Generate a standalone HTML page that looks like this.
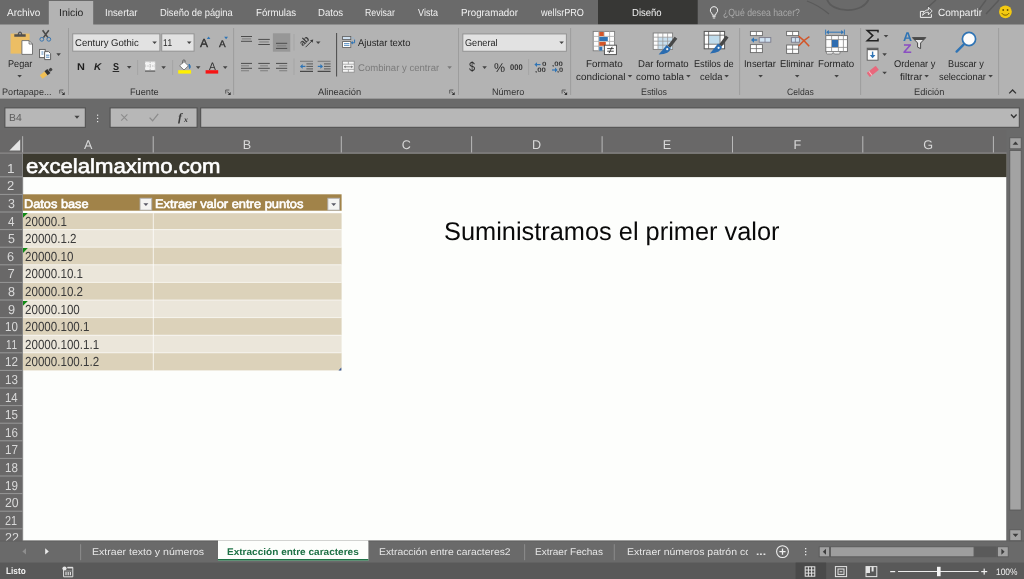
<!DOCTYPE html>
<html lang="es">
<head>
<meta charset="utf-8">
<title>Excel - excelalmaximo.com</title>
<style>
*{box-sizing:border-box;margin:0;padding:0}
html,body{width:1024px;height:579px;overflow:hidden;background:#6a6a6a}
body{position:relative;font-family:"Liberation Sans","DejaVu Sans",sans-serif;font-size:10.4px;color:#262626;font-kerning:none}
#app{position:absolute;left:0;top:0;width:1024px;height:579px;overflow:hidden;will-change:transform}
.r{position:absolute}
.t{position:absolute;white-space:nowrap;line-height:1;transform-origin:0 0;text-rendering:geometricPrecision}
svg{position:absolute;left:0;top:0;width:1024px;height:579px;overflow:hidden}
</style>
</head>
<body>
<div id="app">
<svg viewBox="0 0 1024 579" width="1024" height="579">
<rect x="0" y="0" width="1024" height="24.5" fill="#6a6a6a"/>
<rect x="598" y="0" width="99.7" height="24.5" fill="#373735"/>
<rect x="48.8" y="1" width="44.4" height="24" fill="#b3b3b3"/>
<rect x="0" y="24.5" width="1024" height="74.3" fill="#b3b3b3"/>
<rect x="0" y="98.8" width="1024" height="31.5" fill="#6a6a6a"/>
<rect x="0" y="130" width="1024" height="24" fill="#696868"/>
<rect x="0" y="153.6" width="23" height="388" fill="#696868"/>
<rect x="23" y="153.6" width="983.5" height="387.2" fill="#fdfefc"/>
<rect x="1006.5" y="130" width="17.5" height="411" fill="#6a6a6a"/>
<rect x="0" y="540.8" width="1024" height="22" fill="#6a6a6a"/>
<rect x="0" y="562.6" width="1024" height="16.4" fill="#595959"/>
<rect x="68" y="28" width="0.9" height="67" fill="#9b9b9b"/>
<rect x="233.2" y="28" width="0.9" height="67" fill="#9b9b9b"/>
<rect x="458" y="28" width="0.9" height="67" fill="#9b9b9b"/>
<rect x="570.2" y="28" width="0.9" height="67" fill="#9b9b9b"/>
<rect x="739.2" y="28" width="0.9" height="67" fill="#9b9b9b"/>
<rect x="860.2" y="28" width="0.9" height="67" fill="#9b9b9b"/>
<rect x="998.2" y="28" width="0.9" height="67" fill="#9b9b9b"/>
<rect x="137.3" y="60" width="0.8" height="15" fill="#a2a2a2"/>
<rect x="172.3" y="60" width="0.8" height="15" fill="#a2a2a2"/>
<rect x="293.6" y="34" width="0.8" height="16.5" fill="#a2a2a2"/>
<rect x="293.6" y="58.5" width="0.8" height="16.5" fill="#a2a2a2"/>
<rect x="528.3" y="59" width="0.8" height="16" fill="#a2a2a2"/>
<rect x="336.1" y="33" width="1" height="43.5" fill="#4a4a4a"/>
<rect x="72.75" y="33.85" width="87.10" height="17.30" fill="#e2e2e2" stroke="#8e8e8e" stroke-width="0.9"/>
<rect x="161.75" y="33.85" width="32.30" height="17.30" fill="#e2e2e2" stroke="#8e8e8e" stroke-width="0.9"/>
<rect x="112.6" y="71" width="6.6" height="1" fill="#2a2a2a"/>
<rect x="178.2" y="70.2" width="12.9" height="3.4" fill="#fff000"/>
<rect x="205.6" y="70.2" width="12.6" height="3.4" fill="#f71414"/>
<rect x="272.9" y="33.3" width="17.4" height="18.4" fill="#979797"/>
<rect x="462.85" y="33.95" width="103.50" height="17.30" fill="#e2e2e2" stroke="#8e8e8e" stroke-width="0.9"/>
<rect x="4.90" y="107.90" width="80.40" height="19.40" fill="#b7b7b7" stroke="#4d4d4d" stroke-width="1.0"/>
<rect x="110.10" y="107.90" width="87.00" height="19.40" fill="#b7b7b7" stroke="#4d4d4d" stroke-width="1.0"/>
<rect x="200.70" y="107.90" width="818.60" height="19.40" fill="#b7b7b7" stroke="#4d4d4d" stroke-width="1.0"/>
<rect x="152.7" y="136.2" width="1" height="17.4" fill="#b9b9b9"/>
<rect x="340.8" y="136.2" width="1" height="17.4" fill="#b9b9b9"/>
<rect x="471.1" y="136.2" width="1" height="17.4" fill="#b9b9b9"/>
<rect x="601.6" y="136.2" width="1" height="17.4" fill="#b9b9b9"/>
<rect x="732.0" y="136.2" width="1" height="17.4" fill="#b9b9b9"/>
<rect x="862.3" y="136.2" width="1" height="17.4" fill="#b9b9b9"/>
<rect x="992.9" y="136.2" width="1" height="17.4" fill="#b9b9b9"/>
<rect x="22.2" y="136.2" width="0.9" height="17.4" fill="#b9b9b9"/>
<rect x="0" y="152.4" width="1006.5" height="1.5" fill="#868484"/>
<rect x="0" y="176.3" width="22.6" height="1" fill="#979797"/>
<rect x="0" y="193.9" width="22.6" height="1" fill="#979797"/>
<rect x="0" y="211.5" width="22.6" height="1" fill="#979797"/>
<rect x="0" y="229.10000000000002" width="22.6" height="1" fill="#979797"/>
<rect x="0" y="246.70000000000002" width="22.6" height="1" fill="#979797"/>
<rect x="0" y="264.3" width="22.6" height="1" fill="#979797"/>
<rect x="0" y="281.90000000000003" width="22.6" height="1" fill="#979797"/>
<rect x="0" y="299.5" width="22.6" height="1" fill="#979797"/>
<rect x="0" y="317.1" width="22.6" height="1" fill="#979797"/>
<rect x="0" y="334.70000000000005" width="22.6" height="1" fill="#979797"/>
<rect x="0" y="352.3" width="22.6" height="1" fill="#979797"/>
<rect x="0" y="369.90000000000003" width="22.6" height="1" fill="#979797"/>
<rect x="0" y="387.5" width="22.6" height="1" fill="#979797"/>
<rect x="0" y="405.1" width="22.6" height="1" fill="#979797"/>
<rect x="0" y="422.70000000000005" width="22.6" height="1" fill="#979797"/>
<rect x="0" y="440.3" width="22.6" height="1" fill="#979797"/>
<rect x="0" y="457.90000000000003" width="22.6" height="1" fill="#979797"/>
<rect x="0" y="475.50000000000006" width="22.6" height="1" fill="#979797"/>
<rect x="0" y="493.1" width="22.6" height="1" fill="#979797"/>
<rect x="0" y="510.70000000000005" width="22.6" height="1" fill="#979797"/>
<rect x="0" y="528.3" width="22.6" height="1" fill="#979797"/>
<rect x="22.4" y="153.6" width="0.8" height="387.2" fill="#9a9a9a"/>
<rect x="23" y="153.8" width="983.5" height="23.3" fill="#3c3a2f"/>
<rect x="23" y="194.3" width="318.6" height="16.6" fill="#a18349"/>
<rect x="23" y="210.8" width="318.6" height="2.4" fill="#fdfefc"/>
<rect x="23" y="213.2" width="318.6" height="16.400000000000023" fill="#dcd2ba"/>
<rect x="23" y="229.60000000000002" width="318.6" height="17.599999999999994" fill="#ebe6da"/>
<rect x="23" y="229.10000000000002" width="318.6" height="1" fill="rgba(255,255,255,0.6)"/>
<rect x="23" y="247.20000000000002" width="318.6" height="17.599999999999994" fill="#dcd2ba"/>
<rect x="23" y="246.70000000000002" width="318.6" height="1" fill="rgba(255,255,255,0.6)"/>
<rect x="23" y="264.8" width="318.6" height="17.600000000000023" fill="#ebe6da"/>
<rect x="23" y="264.3" width="318.6" height="1" fill="rgba(255,255,255,0.6)"/>
<rect x="23" y="282.40000000000003" width="318.6" height="17.599999999999966" fill="#dcd2ba"/>
<rect x="23" y="281.90000000000003" width="318.6" height="1" fill="rgba(255,255,255,0.6)"/>
<rect x="23" y="300.0" width="318.6" height="17.600000000000023" fill="#ebe6da"/>
<rect x="23" y="299.5" width="318.6" height="1" fill="rgba(255,255,255,0.6)"/>
<rect x="23" y="317.6" width="318.6" height="17.600000000000023" fill="#dcd2ba"/>
<rect x="23" y="317.1" width="318.6" height="1" fill="rgba(255,255,255,0.6)"/>
<rect x="23" y="335.20000000000005" width="318.6" height="17.599999999999966" fill="#ebe6da"/>
<rect x="23" y="334.70000000000005" width="318.6" height="1" fill="rgba(255,255,255,0.6)"/>
<rect x="23" y="352.8" width="318.6" height="17.600000000000023" fill="#dcd2ba"/>
<rect x="23" y="352.3" width="318.6" height="1" fill="rgba(255,255,255,0.6)"/>
<rect x="152.8" y="213.2" width="1" height="157.2" fill="rgba(255,255,255,0.75)"/>
<rect x="140.05" y="198.25" width="11.70" height="11.90" fill="#f4f4f2" stroke="#b0b0b0" stroke-width="0.9"/>
<rect x="327.85" y="198.25" width="11.70" height="11.90" fill="#f4f4f2" stroke="#b0b0b0" stroke-width="0.9"/>
<rect x="1009.80" y="137.80" width="11.40" height="11.00" fill="#a3a3a3" stroke="#565656" stroke-width="0.8"/>
<rect x="1009.80" y="150.40" width="11.40" height="359.60" fill="#a3a3a3" stroke="#565656" stroke-width="0.8"/>
<rect x="1009.80" y="529.80" width="11.40" height="11.00" fill="#a3a3a3" stroke="#565656" stroke-width="0.8"/>
<rect x="80.2" y="544.2" width="0.9" height="16" fill="#8f8f8f"/>
<rect x="524.2" y="544.2" width="0.9" height="16" fill="#8f8f8f"/>
<rect x="613.8" y="544.2" width="0.9" height="16" fill="#8f8f8f"/>
<rect x="218" y="540.8" width="150.4" height="19.8" fill="#fdfefc"/>
<rect x="218" y="559" width="150.4" height="1.6" fill="#1e7145"/>
<rect x="819.20" y="546.80" width="10.20" height="10.00" fill="#a3a3a3" stroke="#565656" stroke-width="0.8"/>
<rect x="830.40" y="546.80" width="143.60" height="10.00" fill="#9e9e9e" stroke="#565656" stroke-width="0.8"/>
<rect x="974.4" y="546.4" width="22.4" height="10.8" fill="#5a5a5a"/>
<rect x="997.40" y="546.80" width="10.80" height="10.00" fill="#a3a3a3" stroke="#565656" stroke-width="0.8"/>
<rect x="0" y="540.6" width="218" height="0.8" fill="#5c5c5c"/>
<rect x="368.4" y="540.6" width="656" height="0.8" fill="#5c5c5c"/>
<rect x="795.6" y="562.6" width="30.6" height="16.4" fill="#4a4a4a"/>
<rect x="890.2" y="571" width="5" height="1.2" fill="#f0f0f0"/>
<rect x="898" y="571" width="80.6" height="1" fill="#ececec"/>
<rect x="937" y="566.8" width="3.6" height="9.4" fill="#f4f4f4"/>
<rect x="981.2" y="571" width="6" height="1.2" fill="#f0f0f0"/>
<rect x="983.6" y="568.6" width="1.2" height="6" fill="#f0f0f0"/>
<path d="M59.699999999999996,93.6V90.0H63.3" stroke="#555" stroke-width="0.9" fill="none"/><path d="M61.3,91.6L63.9,94.19999999999999" stroke="#333" stroke-width="0.9" fill="none"/><path d="M64.7,92.0V95.0H61.699999999999996z" fill="#333"/>
<path d="M225.70000000000002,93.6V90.0H229.3" stroke="#555" stroke-width="0.9" fill="none"/><path d="M227.3,91.6L229.9,94.19999999999999" stroke="#333" stroke-width="0.9" fill="none"/><path d="M230.70000000000002,92.0V95.0H227.70000000000002z" fill="#333"/>
<path d="M449.7,93.6V90.0H453.3" stroke="#555" stroke-width="0.9" fill="none"/><path d="M451.3,91.6L453.90000000000003,94.19999999999999" stroke="#333" stroke-width="0.9" fill="none"/><path d="M454.7,92.0V95.0H451.7z" fill="#333"/>
<path d="M562.1,93.6V90.0H565.7" stroke="#555" stroke-width="0.9" fill="none"/><path d="M563.7,91.6L566.3000000000001,94.19999999999999" stroke="#333" stroke-width="0.9" fill="none"/><path d="M567.1,92.0V95.0H564.1z" fill="#333"/>
<path d="M17.30,74.90h4.6l-2.30,2.6z" fill="#444444"/>
<path d="M56.30,53.30h4.6l-2.30,2.6z" fill="#444444"/>
<path d="M152.30,41.50h4.6l-2.30,2.6z" fill="#444444"/>
<path d="M186.90,41.50h4.6l-2.30,2.6z" fill="#444444"/>
<path d="M126.90,66.10h4.6l-2.30,2.6z" fill="#444444"/>
<path d="M161.30,66.30h4.6l-2.30,2.6z" fill="#444444"/>
<path d="M195.90,66.30h4.6l-2.30,2.6z" fill="#444444"/>
<path d="M222.90,66.30h4.6l-2.30,2.6z" fill="#444444"/>
<rect x="241.00" y="36.00" width="11" height="1" fill="#4c4c4c"/>
<rect x="241.80" y="38.40" width="9.4" height="1" fill="#7d7d7d"/>
<rect x="241.00" y="40.80" width="11" height="1" fill="#4c4c4c"/>
<rect x="258.30" y="38.90" width="11.5" height="1" fill="#4c4c4c"/>
<rect x="259.25" y="41.45" width="9.6" height="1" fill="#7d7d7d"/>
<rect x="258.30" y="44.00" width="11.5" height="1" fill="#4c4c4c"/>
<rect x="276.00" y="42.80" width="11.2" height="1" fill="#4c4c4c"/>
<rect x="276.90" y="45.35" width="9.4" height="1" fill="#7d7d7d"/>
<rect x="276.00" y="47.90" width="11.2" height="1" fill="#4c4c4c"/>
<rect x="241.00" y="62.90" width="11" height="1" fill="#4c4c4c"/>
<rect x="241.00" y="65.35" width="8" height="1" fill="#7d7d7d"/>
<rect x="241.00" y="67.80" width="11" height="1" fill="#4c4c4c"/>
<rect x="241.00" y="70.25" width="8" height="1" fill="#7d7d7d"/>
<rect x="258.30" y="62.90" width="11.5" height="1" fill="#4c4c4c"/>
<rect x="260.15" y="65.35" width="7.8" height="1" fill="#7d7d7d"/>
<rect x="258.30" y="67.80" width="11.5" height="1" fill="#4c4c4c"/>
<rect x="260.15" y="70.25" width="7.8" height="1" fill="#7d7d7d"/>
<rect x="276.00" y="62.90" width="11.2" height="1" fill="#4c4c4c"/>
<rect x="279.20" y="65.35" width="8" height="1" fill="#7d7d7d"/>
<rect x="276.00" y="67.80" width="11.2" height="1" fill="#4c4c4c"/>
<rect x="279.20" y="70.25" width="8" height="1" fill="#7d7d7d"/>
<path d="M315.90,41.50h4.6l-2.30,2.6z" fill="#444444"/>
<path d="M447.30,66.30h4.6l-2.30,2.6z" fill="#7a7a7a"/>
<path d="M559.30,41.50h4.6l-2.30,2.6z" fill="#444444"/>
<path d="M482.30,66.30h4.6l-2.30,2.6z" fill="#444444"/>
<path d="M627.70,74.90h4.6l-2.30,2.6z" fill="#444444"/>
<path d="M686.10,74.90h4.6l-2.30,2.6z" fill="#444444"/>
<path d="M724.30,74.90h4.6l-2.30,2.6z" fill="#444444"/>
<path d="M924.30,74.90h4.6l-2.30,2.6z" fill="#444444"/>
<path d="M988.30,74.90h4.6l-2.30,2.6z" fill="#444444"/>
<path d="M758.30,74.90h4.6l-2.30,2.6z" fill="#444444"/>
<path d="M794.90,74.90h4.6l-2.30,2.6z" fill="#444444"/>
<path d="M834.30,74.90h4.6l-2.30,2.6z" fill="#444444"/>
<path d="M883.70,34.90h4.6l-2.30,2.6z" fill="#444444"/>
<path d="M882.30,53.30h4.6l-2.30,2.6z" fill="#444444"/>
<path d="M882.30,71.70h4.6l-2.30,2.6z" fill="#444444"/>
<path d="M1009.2,93.4l3.4,-3.4l3.4,3.4" stroke="#333" stroke-width="1.3" fill="none"/>
<path d="M74.40,115.70h5.2l-2.60,3z" fill="#444"/>
<rect x="97" y="114.6" width="1.2" height="1.2" fill="#e8e8e8"/>
<rect x="97" y="117.8" width="1.2" height="1.2" fill="#e8e8e8"/>
<rect x="97" y="121" width="1.2" height="1.2" fill="#e8e8e8"/>
<path d="M121.2,114.4l6.2,6.2M127.4,114.4l-6.2,6.2" stroke="#8c8c8c" stroke-width="1.1" fill="none"/>
<path d="M149.6,117.6l3,3.2l5.6,-7" stroke="#8c8c8c" stroke-width="1.3" fill="none"/>
<path d="M1011,114.6l2.8,2.8l2.8,-2.8" stroke="#333" stroke-width="1.4" fill="none"/>
<path d="M20.2,139.6V150.4H9.4z" fill="#e4e4e4"/>
<path d="M143.40,203.20h5l-2.50,2.8z" fill="#5a5a66"/>
<path d="M331.20,203.20h5l-2.50,2.8z" fill="#5a5a66"/>
<path d="M23,212.90h4.8l-4.8,4.8z" fill="#0f8a14"/>
<path d="M23,248.10h4.8l-4.8,4.8z" fill="#0f8a14"/>
<path d="M23,300.90h4.8l-4.8,4.8z" fill="#0f8a14"/>
<path d="M341.3,367.6v2.8h-2.8z" fill="#3a5a9a"/>
<path d="M1012.6,144.8h5.8l-2.9,-3.2z" fill="#3c3c3c"/>
<path d="M1012.6,533.8h5.8l-2.9,3.2z" fill="#3c3c3c"/>
<path d="M26,548.2v6.4l-3.6,-3.2z" fill="#8e8e8e"/>
<path d="M45.2,548.2v6.4l3.6,-3.2z" fill="#ececec"/>
<circle cx="782.5" cy="551.6" r="5.9" fill="none" stroke="#f0f0f0" stroke-width="1.1"/><path d="M779.4,551.6h6.2M782.5,548.5v6.2" stroke="#f0f0f0" stroke-width="1.3" fill="none"/>
<rect x="805" y="548" width="1.3" height="1.3" fill="#e8e8e8"/>
<rect x="805" y="551" width="1.3" height="1.3" fill="#e8e8e8"/>
<rect x="805" y="554" width="1.3" height="1.3" fill="#e8e8e8"/>
<path d="M826,548.8v6l-3.2,-3z" fill="#3c3c3c"/>
<path d="M1001.4,548.8v6l3.2,-3z" fill="#3c3c3c"/>
<path d="M63.6,569.4v7.4h9.2v-9.4h-5.2" fill="none" stroke="#e0e0e0" stroke-width="1"/><rect x="67.4" y="566.9" width="5.4" height="1.5" fill="#e0e0e0"/><path d="M66,572v3.2M68.2,572v3.2M70.4,572v3.2" stroke="#e0e0e0" stroke-width="1.2"/><path d="M65,571h6.6" stroke="#c8c8c8" stroke-width="0.6"/><circle cx="64.5" cy="568.5" r="2.1" fill="#e6e6e6"/>
<g fill="none" stroke="#e4e4e4" stroke-width="1"><rect x="805.2" y="566.8" width="9.6" height="9.4"/><path d="M808.4,566.8v9.4M811.6,566.8v9.4M805.2,570v0h9.6M805.2,573.1h9.6"/></g>
<g fill="none" stroke="#e4e4e4" stroke-width="1"><rect x="835.4" y="566.6" width="11.2" height="10"/><rect x="838" y="569" width="6" height="5.4"/><path d="M839.6,571.8h2.8"/></g>
<g fill="none" stroke="#e4e4e4" stroke-width="1"><rect x="866" y="566.6" width="10.8" height="10"/></g><path d="M866,566.6h4v6.4h-4z M871.6,566.6h2v5h-2z" fill="#e4e4e4"/>
<rect x="10.6" y="33.6" width="19" height="20" fill="#ecbe64"/><path d="M14.3,36.8v-2.6h3.4c0.2,-1.6 1.2,-2.8 2.3,-2.8s2.1,1.2 2.3,2.8h3.4v2.6z" fill="#505050"/><circle cx="20" cy="33.6" r="0.9" fill="#b0b0b0"/><path d="M21.9,40.6h7.2l3.4,3.4v10.4h-10.6z" fill="#ffffff" stroke="#6a6a6a" stroke-width="0.9"/><path d="M29.1,40.6v3.4h3.4" fill="none" stroke="#6a6a6a" stroke-width="0.9"/>
<path d="M42.6,30.2l5.4,7.4M48.8,30.2l-5.4,7.4" stroke="#4a4a4a" stroke-width="1.6" fill="none"/><circle cx="41.8" cy="39.3" r="1.9" fill="none" stroke="#3a76b0" stroke-width="1"/><circle cx="48.8" cy="39.3" r="1.9" fill="none" stroke="#3a76b0" stroke-width="1"/>
<rect x="39.6" y="49.4" width="5.6" height="8.2" fill="#fff" stroke="#555" stroke-width="0.9"/><path d="M41.4,52h2M41.4,54h2" stroke="#3a76b0" stroke-width="0.9"/><path d="M44.6,51.6h4l2,2v6h-6z" fill="#fff" stroke="#555" stroke-width="0.9"/><path d="M46,55.2h3.4M46,57.2h3.4" stroke="#3a76b0" stroke-width="0.9"/>
<g transform="rotate(-38 46 72.5)"><rect x="39.4" y="70.8" width="6.4" height="4.6" fill="#efbf55"/><rect x="45.6" y="70.6" width="3.6" height="5" fill="#333"/><rect x="49.6" y="71.6" width="3.4" height="3" rx="1" fill="#444"/></g>
<path d="M206.8,39h3.6l-1.8,-2.4z" fill="#2f74b5"/><path d="M224.2,36.8h3.8l-1.9,2.4z" fill="#2f74b5"/>
<rect x="145" y="61.6" width="10.2" height="9" fill="#f4f4f4"/><path d="M145,66h10.2M150.1,61.6v9" stroke="#b3b3b3" stroke-width="1" stroke-dasharray="1.2 1.2"/><path d="M145,61.9h10.2M145.3,61.6v9M154.9,61.6v9" stroke="#c6c6c6" stroke-width="0.6" stroke-dasharray="1.2 1.2" fill="none"/><rect x="145" y="70.5" width="10.2" height="1.1" fill="#505050"/>
<path d="M184,61.6l4.4,4.2l-4.4,4.2l-4.4,-4.2z" fill="#fcfcfc" stroke="#666" stroke-width="0.8"/><path d="M182.6,63.4v-2.2a1.3,1.3 0 0 1 2.6,0v1" fill="none" stroke="#555" stroke-width="0.8"/><path d="M189,64c1.6,1.6 1.8,3.4 0.6,4.6c-0.4,-1.2 -0.6,-2.8 -0.6,-4.6z" fill="#2f74b5" stroke="#2f74b5" stroke-width="0.8"/>
<path d="M305.6,47.2l6.8,-6.8" stroke="#3c3c3c" stroke-width="1" fill="none"/><path d="M313.2,39.6l-3.2,0.6l2.6,2.6z" fill="#3c3c3c"/>
<rect x="342.6" y="36.4" width="8.2" height="3.2" fill="#cfe0f0" stroke="#5a5a5a" stroke-width="0.8"/><rect x="342.6" y="41.6" width="8.2" height="5.8" fill="#fff" stroke="#5a5a5a" stroke-width="0.8"/><path d="M344,43.6h5.4M344,45.4h5.4" stroke="#2f74b5" stroke-width="0.8"/><path d="M354.6,39.6v3.2h-3" stroke="#2f74b5" stroke-width="1" fill="none"/><path d="M350.8,42.8l2,-1.8v3.6z" fill="#2f74b5"/><path d="M351.6,38h2.6" stroke="#8fb3d6" stroke-width="0.9"/>
<rect x="300" y="60.8" width="13" height="1" fill="#7a7a7a"/><rect x="300" y="70.8" width="13" height="1.1" fill="#3c3c3c"/>
<rect x="306.4" y="63.4" width="6.6" height="1" fill="#5a5a5a"/>
<rect x="306.4" y="65.9" width="6.6" height="1" fill="#5a5a5a"/>
<rect x="306.4" y="68.4" width="6.6" height="1" fill="#5a5a5a"/>
<path d="M301.6,66.4h3.8" stroke="#2f74b5" stroke-width="1.2"/><path d="M300,66.4l2.6,-2.4v4.8z" fill="#2f74b5"/>
<rect x="317.6" y="60.8" width="13" height="1" fill="#7a7a7a"/><rect x="317.6" y="70.8" width="13" height="1.1" fill="#3c3c3c"/>
<rect x="324.0" y="63.4" width="6.6" height="1" fill="#5a5a5a"/>
<rect x="324.0" y="65.9" width="6.6" height="1" fill="#5a5a5a"/>
<rect x="324.0" y="68.4" width="6.6" height="1" fill="#5a5a5a"/>
<path d="M317.8,66.4h3.6" stroke="#2f74b5" stroke-width="1.2"/><path d="M323.0,66.4l-2.6,-2.4v4.8z" fill="#2f74b5"/>
<rect x="342.6" y="61.2" width="11.6" height="11" fill="#f6f6f6" stroke="#8a8a8a" stroke-width="0.8"/><path d="M342.6,64.2h11.6M342.6,69.4h11.6M348.4,61.2v3M348.4,69.4v2.8" stroke="#9a9a9a" stroke-width="0.8"/><path d="M344.4,66.8h8" stroke="#7a7a7a" stroke-width="0.9"/><path d="M343.8,66.8l1.8,-1.4v2.8zM353,66.8l-1.8,-1.4v2.8z" fill="#7a7a7a"/>
<path d="M536,64.6h4.4" stroke="#2f74b5" stroke-width="1.2"/><path d="M534.4,64.6l2.6,-2.4v4.8z" fill="#2f74b5"/>
<path d="M552,70h4" stroke="#2f74b5" stroke-width="1.2"/><path d="M557.6,70l-2.6,-2.4v4.8z" fill="#2f74b5"/>
<rect x="593.2" y="31.4" width="21.4" height="19.4" fill="#fdfdfd" stroke="#7d7d7d" stroke-width="0.9"/><path d="M598.7,31.4v19.4M604.1,31.4v19.4M609.6,31.4v19.4M593.2,36.4h21.4M593.2,41.4h21.4M593.2,46.2h21.4" stroke="#a8a8a8" stroke-width="0.8" fill="none"/><rect x="599.2" y="32" width="4.6" height="4" fill="#d2562a"/><rect x="599.2" y="37" width="8.6" height="4" fill="#2f74b5"/><rect x="599.2" y="42" width="6.6" height="3.8" fill="#d2562a"/><rect x="599.2" y="46.8" width="3.2" height="3.8" fill="#2f74b5"/><rect x="604.4" y="45.2" width="12" height="9.4" fill="#fdfdfd" stroke="#4a4a4a" stroke-width="0.9"/><path d="M607.2,48.6h6.6M607.2,51.2h6.6M612.2,46.8l-3.2,6.4" stroke="#333" stroke-width="0.9" fill="none"/>
<rect x="653.2" y="33" width="19.4" height="16.4" fill="#fdfdfd" stroke="#7d7d7d" stroke-width="0.9"/><rect x="658" y="37.2" width="14.2" height="11.8" fill="#c9e0f0"/><path d="M658,33v16.4M662.8,33v16.4M667.6,33v16.4M653.2,37.2h19.4M653.2,41.2h19.4M653.2,45.2h19.4" stroke="#9a9a9a" stroke-width="0.8" fill="none"/>
<path d="M676,37.8L669.0,46.800000000000004" stroke="#474747" stroke-width="3.4" stroke-linecap="butt" fill="none"/><path d="M666.6,45.0L670.6,48.2Q670.0,54.2 658.6,54.4Q663.0,49.8 666.6,45.0z" fill="#2a6cb0"/><circle cx="667.2" cy="49.2" r="1.1" fill="#f0f4f8"/>
<rect x="704.2" y="31.4" width="20.4" height="17.4" fill="#fdfdfd" stroke="#555" stroke-width="1"/><rect x="709" y="35.6" width="10.6" height="8.2" fill="#c0dcec"/><path d="M708.6,31.4v17.4M720,31.4v17.4M704.2,35.2h20.4M704.2,44.2h20.4" stroke="#555" stroke-width="0.8" fill="none"/>
<path d="M727.2,36.4L720.4,45.400000000000006" stroke="#474747" stroke-width="3.4" stroke-linecap="butt" fill="none"/><path d="M718.0,43.6L722.0,46.8Q721.4,52.8 710,53.4Q714.4,48.4 718.0,43.6z" fill="#2a6cb0"/><circle cx="718.6" cy="47.8" r="1.1" fill="#f0f4f8"/>
<rect x="750.4" y="31.4" width="12" height="4.2" fill="#fdfdfd" stroke="#6a6a6a" stroke-width="0.9"/><path d="M756.4,31.4v4.2" stroke="#6a6a6a" stroke-width="0.8"/>
<rect x="759.2" y="37.6" width="11.6" height="4.6" fill="#cfe2f2" stroke="#7a7a8a" stroke-width="0.9"/><path d="M765.0,37.6v4.6" stroke="#7a7a8a" stroke-width="0.8"/>
<rect x="750.4" y="44.6" width="12" height="8" fill="#fdfdfd" stroke="#6a6a6a" stroke-width="0.9"/><path d="M756.4,44.6v8" stroke="#6a6a6a" stroke-width="0.8"/><path d="M750.4,48.6h12" stroke="#6a6a6a" stroke-width="0.8"/>
<path d="M753.2,40h4" stroke="#2f74b5" stroke-width="1.4"/><path d="M751,40l3,-2.8v5.6z" fill="#2f74b5"/>
<rect x="786.6" y="31.4" width="12" height="4.2" fill="#fdfdfd" stroke="#6a6a6a" stroke-width="0.9"/><path d="M792.6,31.4v4.2" stroke="#6a6a6a" stroke-width="0.8"/>
<rect x="791.4" y="37.6" width="8" height="4.6" fill="#cfe2f2" stroke="#7a7a8a" stroke-width="0.9"/><path d="M795.4,37.6v4.6" stroke="#7a7a8a" stroke-width="0.8"/>
<rect x="786.6" y="45" width="12" height="8.4" fill="#fdfdfd" stroke="#6a6a6a" stroke-width="0.9"/><path d="M792.6,45v8.4" stroke="#6a6a6a" stroke-width="0.8"/><path d="M786.6,49.2h12" stroke="#6a6a6a" stroke-width="0.8"/>
<path d="M798.6,36.2c4,3 7.4,6.2 10.6,10M809.4,36.6c-4,2.4 -7.6,5.4 -10.8,9.4" stroke="#d2562a" stroke-width="1.5" fill="none"/>
<path d="M827,32.2h16" stroke="#2f74b5" stroke-width="1"/><path d="M826.2,32.2l2.6,-2.2v4.4zM843.8,32.2l-2.6,-2.2v4.4z" fill="#2f74b5"/><path d="M825.6,29.6v5.2M844.4,29.6v5.2" stroke="#2f74b5" stroke-width="0.9"/><rect x="825.8" y="35.6" width="21.6" height="16" fill="#fdfdfd" stroke="#6a6a6a" stroke-width="0.9"/><path d="M831.6,35.6v16M838.4,35.6v16M843.4,35.6v16M825.8,39.6h21.6M825.8,47.4h21.6" stroke="#8a8a8a" stroke-width="0.8" fill="none"/><rect x="832" y="40" width="6" height="7" fill="#2f6db0"/><path d="M826.4,51.6v1.4q0,1 1,1h4.6l1.2,-1.6l1.2,1.6h4.6q1,0 1,-1v-1.4z" fill="#f4f4f4" stroke="#6a6a6a" stroke-width="0.7"/>
<path d="M878,32.6v-2.2h-10.8l5.6,5.2l-5.6,5.2h10.8v-2.2" fill="none" stroke="#222" stroke-width="1.5" stroke-linejoin="miter"/>
<rect x="867.2" y="48.2" width="10.8" height="12" fill="#fdfdfd" stroke="#5a5a5a" stroke-width="0.9"/><rect x="867.2" y="48.2" width="10.8" height="2" fill="#5a5a5a"/><path d="M872.6,51.6v5" stroke="#2f74b5" stroke-width="1.4"/><path d="M869.8,55l2.8,3.2l2.8,-3.2z" fill="#2f74b5"/>
<g transform="rotate(-38 872.8 71.4)"><rect x="867" y="68.8" width="11.6" height="5.2" rx="0.8" fill="#e8687c"/><rect x="869.2" y="68.8" width="1" height="5.2" fill="#f6c0c8"/></g>
<path d="M912.4,37.6h13.4l-5.2,5.4v5.6l-3,-1.4v-4.2z" fill="#e8e8e8" stroke="#4a4a4a" stroke-width="1"/><path d="M912.4,37.6h13.4l-2.2,2.4h-9z" fill="#4a4a4a"/>
<path d="M963.6,44.6l-7,7" stroke="#2f74b5" stroke-width="2.4" stroke-linecap="round"/><circle cx="969" cy="39" r="6.6" fill="#fdfdfd" stroke="#2f74b5" stroke-width="1.7"/>
<g fill="none" stroke="#5a5a5a" stroke-width="1.8"><path d="M827,-1c4,15 38,15 42,-1"/><path d="M807,1c8,3 16,8 22,13" stroke-width="1.3"/><path d="M936,0l-9,8M986,0l-7,9.6M999,0l-13,14" stroke-width="1.5"/></g>
<path d="M714,6.6a3.7,3.7 0 0 1 2.4,6.5c-0.6,0.6 -0.8,1.2 -0.8,2.1h-3.2c0,-0.9 -0.2,-1.5 -0.8,-2.1a3.7,3.7 0 0 1 2.4,-6.5z" fill="none" stroke="#f0f0f0" stroke-width="1"/><path d="M712.4,16.6h3.2M712.8,18h2.4" stroke="#f0f0f0" stroke-width="0.9"/>
<path d="M924.2,11.4h-3.8v6h11v-3.2" fill="none" stroke="#f0f0f0" stroke-width="1"/><path d="M922.6,15.4c0.4,-3.4 2.6,-5.4 5.8,-5.6v-2.6l3.8,3.8l-3.8,3.8v-2.6c-2.4,0 -4.4,1 -5.8,3.2z" fill="none" stroke="#f0f0f0" stroke-width="0.9" stroke-linejoin="round"/>
<circle cx="1005.4" cy="11.8" r="6.4" fill="#f3c911"/><circle cx="1003.2" cy="10" r="0.9" fill="#6b5200"/><circle cx="1007.6" cy="10" r="0.9" fill="#6b5200"/><path d="M1001.8,13.2c1.6,2.6 5.6,2.6 7.2,0" fill="none" stroke="#6b5200" stroke-width="1"/>
</svg>
<div class="t" style="left:6.98px;top:9.28px;font-size:10.3px;color:#f2f2f2;transform:scaleX(0.9737);">Archivo</div>
<div class="t" style="left:104.61px;top:9.28px;font-size:10.3px;color:#f2f2f2;transform:scaleX(0.9320);">Insertar</div>
<div class="t" style="left:159.73px;top:9.28px;font-size:10.3px;color:#f2f2f2;transform:scaleX(0.9076);">Diseño de página</div>
<div class="t" style="left:255.71px;top:9.28px;font-size:10.3px;color:#f2f2f2;transform:scaleX(0.9351);">Fórmulas</div>
<div class="t" style="left:317.71px;top:9.28px;font-size:10.3px;color:#f2f2f2;transform:scaleX(0.9342);">Datos</div>
<div class="t" style="left:365.28px;top:9.28px;font-size:10.3px;color:#f2f2f2;transform:scaleX(0.8555);">Revisar</div>
<div class="t" style="left:418.46px;top:9.28px;font-size:10.3px;color:#f2f2f2;transform:scaleX(0.8752);">Vista</div>
<div class="t" style="left:460.70px;top:9.28px;font-size:10.3px;color:#f2f2f2;transform:scaleX(0.9476);">Programador</div>
<div class="t" style="left:540.51px;top:9.28px;font-size:10.3px;color:#f2f2f2;transform:scaleX(0.8824);">wellsrPRO</div>
<div class="t" style="left:632.22px;top:9.28px;font-size:10.3px;color:#f2f2f2;transform:scaleX(0.9258);">Diseño</div>
<div class="t" style="left:937.99px;top:9.28px;font-size:10.3px;color:#f2f2f2;transform:scaleX(0.9771);">Compartir</div>
<div class="t" style="left:58.54px;top:9.28px;font-size:10.3px;color:#262626;transform:scaleX(1.0149);">Inicio</div>
<div class="t" style="left:723.44px;top:9.28px;font-size:10.3px;color:#a9a9a9;transform:scaleX(0.8445);">¿Qué desea hacer?</div>
<div class="t" style="left:2.25px;top:88.13px;font-size:9.3px;color:#333333;transform:scaleX(0.9785);">Portapape...</div>
<div class="t" style="left:130.24px;top:88.13px;font-size:9.3px;color:#333333;transform:scaleX(0.9900);">Fuente</div>
<div class="t" style="left:318.48px;top:88.13px;font-size:9.3px;color:#333333;transform:scaleX(1.0050);">Alineación</div>
<div class="t" style="left:492.05px;top:88.13px;font-size:9.3px;color:#333333;transform:scaleX(0.9773);">Número</div>
<div class="t" style="left:641.27px;top:88.13px;font-size:9.3px;color:#333333;transform:scaleX(0.9508);">Estilos</div>
<div class="t" style="left:786.56px;top:88.13px;font-size:9.3px;color:#333333;transform:scaleX(0.9239);">Celdas</div>
<div class="t" style="left:914.24px;top:88.13px;font-size:9.3px;color:#333333;transform:scaleX(0.9954);">Edición</div>
<div class="t" style="left:7.75px;top:59.70px;font-size:9.8px;color:#262626;transform:scaleX(0.9331);">Pegar</div>
<div class="t" style="left:74.51px;top:38.70px;font-size:9.8px;color:#262626;transform:scaleX(0.9752);">Century Gothic</div>
<div class="t" style="left:163.17px;top:38.70px;font-size:9.8px;color:#262626;transform:scaleX(0.8475);">11</div>
<div class="t" style="left:76.87px;top:62.53px;font-size:10px;color:#1e1e1e;font-weight:700;transform:scaleX(1.0886);">N</div>
<div class="t" style="left:94.13px;top:62.53px;font-size:10px;color:#1e1e1e;font-weight:700;transform:scaleX(1.0062);font-style:italic;">K</div>
<div class="t" style="left:112.94px;top:62.53px;font-size:10px;color:#1e1e1e;font-weight:700;transform:scaleX(0.9013);">S</div>
<div class="t" style="left:357.98px;top:38.70px;font-size:9.8px;color:#262626;transform:scaleX(0.9623);">Ajustar texto</div>
<div class="t" style="left:358.02px;top:63.70px;font-size:9.8px;color:#7b7b7b;transform:scaleX(0.9738);">Combinar y centrar</div>
<div class="t" style="left:464.54px;top:38.70px;font-size:9.8px;color:#262626;transform:scaleX(0.9343);">General</div>
<div class="t" style="left:468.88px;top:59.82px;font-size:13.2px;color:#2a2a2a;transform:scaleX(0.8301);">$</div>
<div class="t" style="left:493.56px;top:62.16px;font-size:12.8px;color:#2a2a2a;transform:scaleX(0.9743);">%</div>
<div class="t" style="left:509.70px;top:64.06px;font-size:8.2px;color:#333;font-weight:700;transform:scaleX(0.9216);">000</div>
<div class="t" style="left:585.69px;top:59.70px;font-size:9.8px;color:#262626;transform:scaleX(1.0065);">Formato</div>
<div class="t" style="left:576.08px;top:72.70px;font-size:9.8px;color:#262626;transform:scaleX(1.0112);">condicional</div>
<div class="t" style="left:637.71px;top:59.70px;font-size:9.8px;color:#262626;transform:scaleX(0.9798);">Dar formato</div>
<div class="t" style="left:636.08px;top:72.70px;font-size:9.8px;color:#262626;">como tabla</div>
<div class="t" style="left:694.25px;top:59.70px;font-size:9.8px;color:#262626;transform:scaleX(0.9334);">Estilos de</div>
<div class="t" style="left:700.10px;top:72.70px;font-size:9.8px;color:#262626;transform:scaleX(0.9560);">celda</div>
<div class="t" style="left:744.13px;top:59.70px;font-size:9.8px;color:#262626;transform:scaleX(0.9640);">Insertar</div>
<div class="t" style="left:780.23px;top:59.70px;font-size:9.8px;color:#262626;transform:scaleX(0.9585);">Eliminar</div>
<div class="t" style="left:818.20px;top:59.70px;font-size:9.8px;color:#262626;transform:scaleX(0.9923);">Formato</div>
<div class="t" style="left:893.56px;top:59.70px;font-size:9.8px;color:#262626;transform:scaleX(0.9515);">Ordenar y</div>
<div class="t" style="left:899.86px;top:72.70px;font-size:9.8px;color:#262626;transform:scaleX(1.0244);">filtrar</div>
<div class="t" style="left:948.25px;top:59.70px;font-size:9.8px;color:#262626;transform:scaleX(0.9383);">Buscar y</div>
<div class="t" style="left:939.24px;top:72.70px;font-size:9.8px;color:#262626;transform:scaleX(0.9464);">seleccionar</div>
<div class="t" style="left:9.14px;top:114.36px;font-size:10.2px;color:#5c5c5c;transform:scaleX(1.0229);">B4</div>
<div class="t" style="left:178.20px;top:113.31px;font-size:11.4px;color:#3a3a3a;font-weight:700;font-family:'Liberation Serif','DejaVu Serif',serif;transform:scaleX(1.0543);font-style:italic;">f</div>
<div class="t" style="left:183.50px;top:115.71px;font-size:7.4px;color:#3a3a3a;font-weight:700;font-family:'Liberation Serif','DejaVu Serif',serif;transform:scaleX(1.0527);font-style:italic;">x</div>
<div class="t" style="left:83.90px;top:139.33px;font-size:12.6px;color:#d9d9d9;">A</div>
<div class="t" style="left:242.86px;top:139.33px;font-size:12.6px;color:#d9d9d9;">B</div>
<div class="t" style="left:401.82px;top:139.33px;font-size:12.6px;color:#d9d9d9;">C</div>
<div class="t" style="left:532.09px;top:139.33px;font-size:12.6px;color:#d9d9d9;">D</div>
<div class="t" style="left:662.85px;top:139.33px;font-size:12.6px;color:#d9d9d9;">E</div>
<div class="t" style="left:793.54px;top:139.33px;font-size:12.6px;color:#d9d9d9;">F</div>
<div class="t" style="left:923.35px;top:139.33px;font-size:12.6px;color:#d9d9d9;">G</div>
<div class="t" style="left:7.06px;top:161.99px;font-size:13px;color:#d9d9d9;transform:scaleX(1.0526);">1</div>
<div class="t" style="left:7.45px;top:178.99px;font-size:13px;color:#d9d9d9;transform:scaleX(0.9962);">2</div>
<div class="t" style="left:7.63px;top:196.99px;font-size:13px;color:#d9d9d9;transform:scaleX(0.9572);">3</div>
<div class="t" style="left:7.83px;top:214.99px;font-size:13px;color:#d9d9d9;transform:scaleX(0.9007);">4</div>
<div class="t" style="left:7.60px;top:231.99px;font-size:13px;color:#d9d9d9;transform:scaleX(0.9572);">5</div>
<div class="t" style="left:7.45px;top:249.99px;font-size:13px;color:#d9d9d9;transform:scaleX(0.9836);">6</div>
<div class="t" style="left:7.43px;top:266.99px;font-size:13px;color:#d9d9d9;">7</div>
<div class="t" style="left:7.55px;top:284.99px;font-size:13px;color:#d9d9d9;transform:scaleX(0.9672);">8</div>
<div class="t" style="left:7.50px;top:302.99px;font-size:13px;color:#d9d9d9;transform:scaleX(0.9825);">9</div>
<div class="t" style="left:5.42px;top:319.99px;font-size:13px;color:#d9d9d9;transform:scaleX(0.8872);">10</div>
<div class="t" style="left:5.54px;top:337.99px;font-size:13px;color:#d9d9d9;transform:scaleX(0.7713);">11</div>
<div class="t" style="left:5.41px;top:354.99px;font-size:13px;color:#d9d9d9;transform:scaleX(0.8973);">12</div>
<div class="t" style="left:5.42px;top:372.99px;font-size:13px;color:#d9d9d9;transform:scaleX(0.8916);">13</div>
<div class="t" style="left:5.43px;top:390.99px;font-size:13px;color:#d9d9d9;transform:scaleX(0.8786);">14</div>
<div class="t" style="left:5.42px;top:407.99px;font-size:13px;color:#d9d9d9;transform:scaleX(0.8898);">15</div>
<div class="t" style="left:5.42px;top:425.99px;font-size:13px;color:#d9d9d9;transform:scaleX(0.8916);">16</div>
<div class="t" style="left:5.41px;top:442.99px;font-size:13px;color:#d9d9d9;transform:scaleX(0.8973);">17</div>
<div class="t" style="left:5.42px;top:460.99px;font-size:13px;color:#d9d9d9;transform:scaleX(0.8911);">18</div>
<div class="t" style="left:5.41px;top:478.99px;font-size:13px;color:#d9d9d9;transform:scaleX(0.8947);">19</div>
<div class="t" style="left:4.58px;top:495.99px;font-size:13px;color:#d9d9d9;transform:scaleX(0.9475);">20</div>
<div class="t" style="left:4.65px;top:513.99px;font-size:13px;color:#d9d9d9;transform:scaleX(0.8351);">21</div>
<div class="t" style="left:4.57px;top:530.99px;font-size:13px;color:#d9d9d9;transform:scaleX(0.9580);clip-path:inset(0 0 3.49px 0);">22</div>
<div class="t" style="left:26.06px;top:156.73px;font-size:20.4px;color:#ffffff;transform:scaleX(1.0865);-webkit-text-stroke:0.6px #fff;">excelalmaximo.com</div>
<div class="t" style="left:24.45px;top:197.67px;font-size:12.2px;color:#ffffff;transform:scaleX(1.0470);-webkit-text-stroke:0.6px #fff;">Datos base</div>
<div class="t" style="left:154.74px;top:197.67px;font-size:12.2px;color:#ffffff;transform:scaleX(1.0581);-webkit-text-stroke:0.6px #fff;">Extraer valor entre puntos</div>
<div class="t" style="left:24.62px;top:214.91px;font-size:13.1px;color:#3a3a3a;transform:scaleX(0.8850);">20000.1</div>
<div class="t" style="left:24.62px;top:231.91px;font-size:13.1px;color:#3a3a3a;transform:scaleX(0.8850);">20000.1.2</div>
<div class="t" style="left:24.62px;top:249.91px;font-size:13.1px;color:#3a3a3a;transform:scaleX(0.8850);">20000.10</div>
<div class="t" style="left:24.62px;top:266.91px;font-size:13.1px;color:#3a3a3a;transform:scaleX(0.8850);">20000.10.1</div>
<div class="t" style="left:24.62px;top:284.91px;font-size:13.1px;color:#3a3a3a;transform:scaleX(0.8850);">20000.10.2</div>
<div class="t" style="left:24.62px;top:302.91px;font-size:13.1px;color:#3a3a3a;transform:scaleX(0.8850);">20000.100</div>
<div class="t" style="left:24.62px;top:319.91px;font-size:13.1px;color:#3a3a3a;transform:scaleX(0.8850);">20000.100.1</div>
<div class="t" style="left:24.62px;top:337.91px;font-size:13.1px;color:#3a3a3a;transform:scaleX(0.8850);">20000.100.1.1</div>
<div class="t" style="left:24.62px;top:354.91px;font-size:13.1px;color:#3a3a3a;transform:scaleX(0.8850);">20000.100.1.2</div>
<div class="t" style="left:443.65px;top:220.32px;font-size:25.6px;color:#0a0a0a;transform:scaleX(0.9911);">Suministramos el primer valor</div>
<div class="t" style="left:92.13px;top:547.79px;font-size:9.7px;color:#e6e6e6;transform:scaleX(1.0901);">Extraer texto y números</div>
<div class="t" style="left:226.93px;top:547.79px;font-size:9.7px;color:#1e7145;font-weight:700;transform:scaleX(1.0364);">Extracción entre caracteres</div>
<div class="t" style="left:379.35px;top:547.79px;font-size:9.7px;color:#e6e6e6;transform:scaleX(1.0673);">Extracción entre caracteres2</div>
<div class="t" style="left:534.78px;top:547.79px;font-size:9.7px;color:#e6e6e6;transform:scaleX(1.0337);">Extraer Fechas</div>
<div class="t" style="left:626.74px;top:547.79px;font-size:9.7px;color:#e6e6e6;transform:scaleX(1.0809);clip-path:inset(0 2.2px 0 0);">Extraer números patrón cc</div>
<div class="t" style="left:755.78px;top:547.79px;font-size:9.7px;color:#e6e6e6;font-weight:700;transform:scaleX(1.2428);">...</div>
<div class="t" style="left:6.05px;top:567.13px;font-size:9.3px;color:#f2f2f2;font-weight:700;transform:scaleX(0.8856);">Listo</div>
<div class="t" style="left:996.36px;top:567.04px;font-size:9.4px;color:#f0f0f0;transform:scaleX(0.8960);">100%</div>
<div class="t" style="left:200.18px;top:38.01px;font-size:11.8px;color:#2e2e2e;transform:scaleX(1.0224);-webkit-text-stroke:0.3px #2e2e2e;">A</div>
<div class="t" style="left:219.18px;top:39.87px;font-size:9.6px;color:#2e2e2e;transform:scaleX(1.0368);-webkit-text-stroke:0.3px #2e2e2e;">A</div>
<div class="t" style="left:209.18px;top:61.86px;font-size:10.8px;color:#2e2e2e;transform:scaleX(0.9495);">A</div>
<div class="t" style="left:541.88px;top:61.92px;font-size:6px;color:#3a3a3a;font-weight:700;transform:scaleX(1.3317);">0</div>
<div class="t" style="left:535.47px;top:67.58px;font-size:6.4px;color:#3a3a3a;font-weight:700;transform:scaleX(1.2195);">,00</div>
<div class="t" style="left:552.47px;top:61.58px;font-size:6.4px;color:#3a3a3a;font-weight:700;transform:scaleX(1.2195);">,00</div>
<div class="t" style="left:557.49px;top:67.58px;font-size:6.4px;color:#3a3a3a;font-weight:700;transform:scaleX(1.1636);">,0</div>
<div class="t" style="left:902.69px;top:31.33px;font-size:12.6px;color:#2f74b5;font-weight:700;transform:scaleX(0.9937);">A</div>
<div class="t" style="left:902.78px;top:43.33px;font-size:12.6px;color:#8b4fc2;font-weight:700;transform:scaleX(1.1210);">Z</div>
<div class="t" style="left:299.2px;top:35.6px;width:10px;height:10px;line-height:10px;text-align:center;font-size:8.8px;font-weight:700;color:#3a3a3a;transform:rotate(-45deg);transform-origin:50% 50%;letter-spacing:-0.2px">ab</div>
</div>
</body>
</html>
